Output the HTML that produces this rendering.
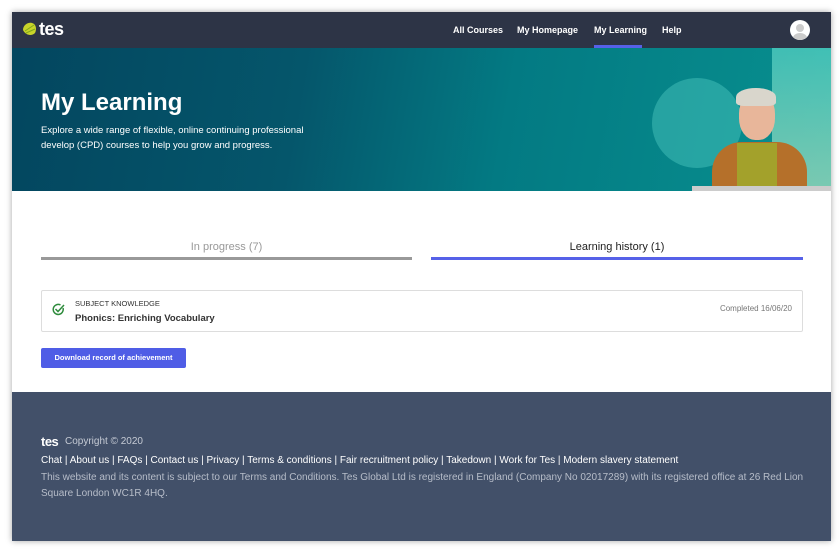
<!DOCTYPE html>
<html><head><meta charset="utf-8"><style>
*{margin:0;padding:0;box-sizing:border-box}
body{width:840px;height:552px;background:#fff;font-family:"Liberation Sans",sans-serif;position:relative;overflow:hidden}
.frame{position:absolute;left:12px;top:12px;width:819px;height:529px;box-shadow:0 0 6px rgba(0,0,0,.35);background:#fff;overflow:hidden}
.nav{position:absolute;left:0;top:0;width:819px;height:36px;background:#2d3446}
.nav a{position:absolute;top:13px;color:#fff;font-size:9px;font-weight:bold;text-decoration:none}
.hero{position:absolute;left:0;top:36px;width:819px;height:143px;overflow:hidden;background:linear-gradient(100deg,#03465f 0%,#05566b 35%,#037a83 60%,#08908f 100%)}
.hero h1{position:absolute;left:29px;top:41px;color:#fff;font-size:24px;font-weight:bold}
.hero p{position:absolute;left:29px;top:75px;color:#fff;font-size:9.5px;line-height:15px;width:285px}
.tab{position:absolute;top:229px;font-size:11px;text-align:center}
.card{position:absolute;left:29px;top:278px;width:762px;height:42px;border:1px solid #ddd;border-radius:2px}
.btn{position:absolute;left:29px;top:336px;width:145px;height:20px;background:#4f5de6;border-radius:2px;color:#fff;font-size:7.5px;font-weight:bold;text-align:center;line-height:20px}
.foot{position:absolute;left:0;top:380px;width:819px;height:149px;background:#425069;color:#fff;font-size:10px}
</style></head><body>
<div class="frame">
<div class="nav">
<svg style="position:absolute;left:10px;top:9px" width="16" height="16" viewBox="0 0 16 16"><path d="M1 9 C1 4 6 1 10 2 C14 3 15 8 13 12 C10 15 4 15 1 9Z" fill="#c8d42a"/><path d="M3 10 L12 4 M4 12 L13 8" stroke="#7fa81a" stroke-width="1"/></svg>
<div style="position:absolute;left:27px;top:7px;color:#fff;font-size:18px;font-weight:bold;letter-spacing:-0.5px">tes</div>
<a style="left:441px">All Courses</a>
<a style="left:505px">My Homepage</a>
<a style="left:582px">My Learning</a>
<a style="left:650px">Help</a>
<div style="position:absolute;left:582px;top:33px;width:48px;height:3px;background:#5661e8"></div>
<div style="position:absolute;left:778px;top:8px;width:20px;height:20px;border-radius:50%;background:#fff;overflow:hidden"><div style="position:absolute;left:6px;top:4px;width:8px;height:8px;border-radius:50%;background:#ccc"></div><div style="position:absolute;left:3px;top:13px;width:14px;height:10px;border-radius:50%;background:#ccc"></div></div>
</div>
<div class="hero">
<div style="position:absolute;left:640px;top:30px;width:90px;height:90px;border-radius:50%;background:rgba(100,220,210,.35)"></div>
<div style="position:absolute;left:760px;top:0;width:60px;height:143px;background:linear-gradient(180deg,rgba(120,240,220,.5),rgba(200,240,200,.6))"></div>
<div style="position:absolute;left:700px;top:94px;width:95px;height:55px;border-radius:30px 30px 0 0;background:#b5702a"></div>
<div style="position:absolute;left:725px;top:95px;width:40px;height:48px;background:#9fae2c;opacity:.8"></div>
<div style="position:absolute;left:727px;top:44px;width:36px;height:48px;border-radius:45%;background:#e8b69a"></div>
<div style="position:absolute;left:724px;top:40px;width:40px;height:18px;border-radius:50% 50% 20% 20%;background:#d9d6cc"></div>
<div style="position:absolute;left:680px;top:138px;width:139px;height:5px;background:#ccc"></div>
<h1>My Learning</h1>
<p>Explore a wide range of flexible, online continuing professional develop (CPD) courses to help you grow and progress.</p>
</div>
<div class="tab" style="left:29px;width:371px;color:#999">In progress (7)</div>
<div style="position:absolute;left:29px;top:245px;width:371px;height:3px;background:#999"></div>
<div class="tab" style="left:419px;width:372px;color:#222">Learning history (1)</div>
<div style="position:absolute;left:419px;top:245px;width:372px;height:3px;background:#5661e8"></div>
<div class="card">
<svg style="position:absolute;left:10px;top:12px" width="13" height="13" viewBox="0 0 13 13"><path d="M11 5 A5 5 0 1 1 8.5 2" fill="none" stroke="#2e8b3c" stroke-width="1.5"/><path d="M3.5 6 L6 8.5 L12 2" fill="none" stroke="#2e8b3c" stroke-width="1.5"/></svg>
<div style="position:absolute;left:33px;top:8px;font-size:7.5px;color:#333">SUBJECT KNOWLEDGE</div>
<div style="position:absolute;left:33px;top:22px;font-size:9.5px;font-weight:bold;color:#333">Phonics: Enriching Vocabulary</div>
<div style="position:absolute;right:10px;top:13px;font-size:8px;color:#777">Completed 16/06/20</div>
</div>
<div class="btn">Download record of achievement</div>
<div class="foot">
<div style="position:absolute;left:29px;top:42px;font-size:13px;font-weight:bold;letter-spacing:-0.5px">tes</div>
<div style="position:absolute;left:53px;top:44px;color:#c5cad4">Copyright © 2020</div>
<div style="position:absolute;left:29px;top:63px">Chat | About us | FAQs | Contact us | Privacy | Terms &amp; conditions | Fair recruitment policy | Takedown | Work for Tes | Modern slavery statement</div>
<div style="position:absolute;left:29px;top:78px;width:775px;line-height:15.5px;color:#b7bdc9">This website and its content is subject to our Terms and Conditions. Tes Global Ltd is registered in England (Company No 02017289) with its registered office at 26 Red Lion Square London WC1R 4HQ.</div>
</div>
</div>
</body></html>
